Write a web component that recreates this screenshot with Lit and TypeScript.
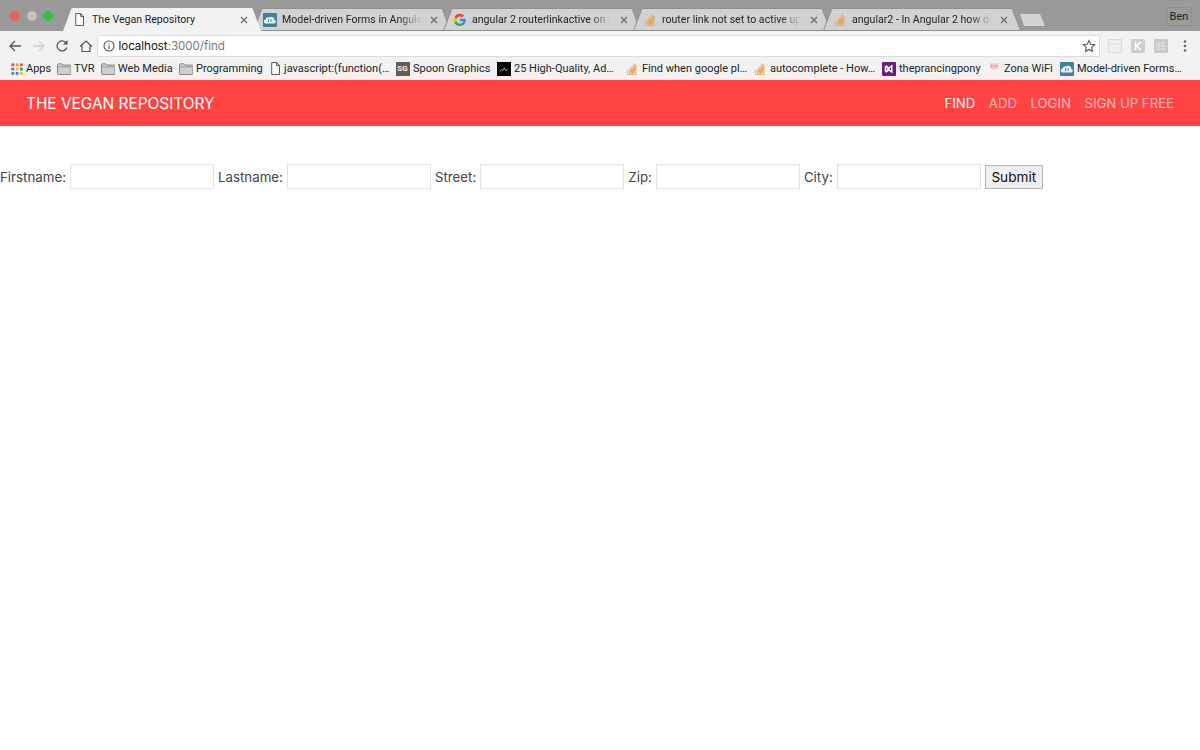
import { LitElement, html, css, svg } from "lit";
import { customElement } from "lit/decorators.js";

const cloud = html`<svg class="fav" viewBox="0 0 14 14"><rect width="14" height="14" rx="1" fill="#3f8299"/><path d="M3 10.500a2 2 0 0 1-.3-4 2.600 2.600 0 0 1 3.600-2 3 3 0 0 1 5 2.300a1.900 1.900 0 0 1 0 3.700z" fill="#e4f0f4"/><path d="M5.500 6v3M8 6v3" stroke="#3f8299" stroke-width=".9"/></svg>`;
const gLogo = html`<svg class="fav" viewBox="0 0 14 14"><path d="M12.900 7.100c0-.5 0-.9-.1-1.300H7v2.500h3.300a2.800 2.800 0 0 1-1.200 1.800v1.500h2a5.900 5.900 0 0 0 1.800-4.500z" fill="#4285f4"/><path d="M7 13c1.600 0 3-.5 4.100-1.400l-2-1.500a3.700 3.700 0 0 1-5.600-1.900H1.400v1.600A6 6 0 0 0 7 13z" fill="#34a853"/><path d="M3.500 8.200a3.600 3.600 0 0 1 0-2.400V4.200H1.400a6 6 0 0 0 0 5.600z" fill="#fbbc05"/><path d="M7 3.400c.9 0 1.700.3 2.300.9L11.100 2.500A6 6 0 0 0 1.400 4.200l2.100 1.600A3.600 3.600 0 0 1 7 3.400z" fill="#ea4335"/></svg>`;
const so = html`<svg class="fav" viewBox="0 0 14 14"><path d="M2.500 8v4.500h8.500V8" fill="none" stroke="#c9b79c" stroke-width="1.200"/><path d="M4 10.800h5.500M4 9.200l5.500.6M4.500 7.400l5.300 1.300M5.600 5.500l4.800 2.400M7.300 3.600l3.900 3.400M8.800 1.500l2.800 3.800" fill="none" stroke="#f2a03f" stroke-width="1.200"/></svg>`;
const file = html`<svg class="fav file" viewBox="0 0 10 12"><path d="M1.500.5h4.500l2.700 2.700v8.300H1.500zM6 .5v2.700h2.700" fill="#fff" stroke="#555" stroke-width=".9"/></svg>`;
const x = html`<svg class="x" viewBox="0 0 8 8"><path d="M1 1l6 6M7 1l-6 6" stroke="#666" stroke-width="1.100"/></svg>`;
const folder = html`<svg class="fav folder" viewBox="0 0 14 12"><path d="M.5 10.800V1.500a.7.7 0 0 1 .7-.7h3.600l1.200 1.300h7.300a.7.7 0 0 1 .7.700v8a.7.7 0 0 1-.7.700H1.200a.7.7 0 0 1-.7-.7z" fill="#cfcfcf" stroke="#7d7d7d" stroke-width=".9"/><path d="M1 3.800h12" stroke="#8e8e8e" stroke-width=".8"/></svg>`;
const appColors = [["#e0503c", "#e8a33a", "#e05a3c"], ["#3f7fdc", "#e8c23a", "#3fa35a"], ["#4aa05a", "#3f7fdc", "#e8c23a"]];
const apps = html`<svg class="fav apps" viewBox="0 0 12 12">${[0, 1, 2].flatMap((r) => [0, 1, 2].map((c) => svg`<rect x=${c * 4.3 + 0.4} y=${r * 4.3 + 0.4} width="2.800" height="2.800" fill=${appColors[r][c]}/>`))}</svg>`;
const sg = html`<span class="sg">SG</span>`;
const blk = html`<svg class="fav" viewBox="0 0 14 14"><rect width="14" height="14" fill="#050505"/><path d="M3 9.500c1-2 1.500-2.500 2-1.500s1 1 1.500-.5.800-2.500 1-1 .5 2.500 3 1.500" fill="none" stroke="#cdb98a" stroke-width=".9"/></svg>`;
const vs = html`<svg class="fav" viewBox="0 0 14 14"><rect width="14" height="14" rx="1" fill="#68217a"/><path d="M10.500 2.500v9L7 8.800 4.500 10.700 2.700 9.500V4.500l1.800-1.200L7 5.200zM4.300 5.800v2.400L5.800 7zM9 5.300 7.300 7 9 8.700z" fill="#fff" fill-rule="evenodd"/></svg>`;
const wifi = html`<svg class="fav" viewBox="0 0 14 14"><path d="M3 1.500c1.200-.8 2.500-.8 3 0 .7-.8 2.500-.8 3 0 1-.8 2-.5 3 0l-1 5-4 1.500-4-1.500z" fill="#f6c9c9"/><path d="M4 4h1M6.500 4h1M9 4h1" stroke="#d8504f" stroke-width="1.200"/></svg>`;

const tabs = [
  { icon: file, title: "The Vegan Repository", active: true },
  { icon: cloud, title: "Model-driven Forms in Angular" },
  { icon: gLogo, title: "angular 2 routerlinkactive on nested" },
  { icon: so, title: "router link not set to active upon" },
  { icon: so, title: "angular2 - In Angular 2 how does" },
];
const bookmarks = [
  { icon: apps, t: "Apps", w: 46 }, { icon: folder, t: "TVR", w: 44 }, { icon: folder, t: "Web Media", w: 78 },
  { icon: folder, t: "Programming", w: 91 }, { icon: file, t: "javascript:(function(…", w: 126 },
  { icon: sg, t: "Spoon Graphics", w: 101 }, { icon: blk, t: "25 High-Quality, Ad…", w: 128 },
  { icon: so, t: "Find when google pl…", w: 128 }, { icon: so, t: "autocomplete - How…", w: 129 },
  { icon: vs, t: "theprancingpony", w: 105 }, { icon: wifi, t: "Zona WiFi", w: 73 }, { icon: cloud, t: "Model-driven Forms…", w: 122 },
];
const fields = ["Firstname", "Lastname", "Street", "Zip", "City"];

@customElement("app-root")
export class AppRoot extends LitElement {
  static styles = css`
    :host { display: block; min-height: 750px; background: #fff; font-family: Inter, "Noto Sans", sans-serif; }
    .strip { height: 31px; background: #9a9a9a; display: flex; position: relative; box-sizing: border-box; font-family: Roboto, sans-serif; }
    .dots { width: 63px; flex: none; display: flex; gap: 6.500px; padding: 11px 0 0 10px; box-sizing: border-box; }
    .dot { width: 10px; height: 10px; border-radius: 50%; }
    .red { background: #f0605a; }
    .grey { background: #c8c2c2; }
    .green { background: #2cc443; }
    .tabs { display: flex; padding-top: 8px; flex: none; }
    .tab { position: relative; width: 198px; height: 23px; margin-right: -8px; flex: none; display: flex; align-items: center;
      padding: 0 13px 0 10px; box-sizing: border-box; font-size: 10.600px; color: #222; gap: 5px; }
    .tab.active { z-index: 2; padding-left: 11px; gap: 7px; }
    .shape { position: absolute; inset: 0; width: 198px; height: 23px; }
    .title { position: relative; flex: 1; white-space: nowrap; overflow: hidden; min-width: 0;
      -webkit-mask-image: linear-gradient(90deg, #000 84%, transparent 100%); mask-image: linear-gradient(90deg, #000 84%, transparent 100%); }
    .tab.active .title { -webkit-mask-image: none; mask-image: none; }
    .fav { width: 14px; height: 14px; flex: none; position: relative; }
    .apps { width: 12px; height: 12px; }
    .file { width: 11px; height: 13px; }
    .folder { height: 12px; }
    .x { width: 8px; height: 8px; flex: none; position: relative; margin-left: 3px; }
    .newtab { width: 25px; height: 12px; margin: 14px 0 0 7px; flex: none; background: #d4d4d4; clip-path: polygon(0 0, 20px 0, 100% 100%, 4px 100%); }
    .spacer { flex: 1; }
    .profile { width: 26px; height: 19px; margin: 7px 8px 0 0; border: 1px solid #8f8f8f; border-radius: 3px; box-sizing: border-box;
      font-size: 11px; color: #222; display: flex; align-items: center; justify-content: center; }
    .toolbar { height: 26px; background: #f2f2f2; display: flex; align-items: center; padding: 4px 0 0 8px; box-sizing: border-box; font-family: Roboto, sans-serif; }
    .nav { width: 14px; height: 14px; flex: none; margin-right: 9.500px; }
    .nav.home { margin-right: 4px; }
    .omni { width: 1003px; height: 22px; flex: none; box-sizing: border-box; background: #fff; border: 1px solid #dcdcdc; border-radius: 2px;
      display: flex; align-items: center; padding: 0 3px 0 5px; font-family: Inter, sans-serif; font-size: 11.500px; color: #777; }
    .omni b { font-weight: 400; color: #111; }
    .info { width: 12px; height: 12px; margin-right: 4px; flex: none; }
    .star { width: 14px; height: 14px; margin-left: auto; flex: none; }
    .ext { display: flex; align-items: center; gap: 9px; margin-left: 8px; }
    .ext svg { width: 14px; height: 14px; }
    .menu { margin-left: 1px; }
    .bookmarks { height: 23px; background: #f2f2f2; display: flex; align-items: center; padding-left: 10.500px; box-sizing: border-box; font-family: Roboto, sans-serif; font-size: 11px; color: #222; }
    .bm { display: flex; align-items: center; gap: 3.500px; white-space: nowrap; flex: none; }
    .sg { width: 14px; height: 14px; flex: none; background: #6a5a52; color: #eee; font-size: 8px; font-weight: 700; display: flex; align-items: center; justify-content: center; }
    header { height: 46px; background: #ff4444; display: flex; align-items: center; justify-content: space-between; padding: 0 26px; box-sizing: border-box; color: #fff; }
    .brand { font-size: 15.400px; }
    nav { display: flex; gap: 13.500px; font-size: 13.200px; color: rgba(255, 255, 255, .65); }
    nav .on { color: #fff; }
    form { display: flex; align-items: center; gap: 4px; padding-top: 38px; font-size: 13.300px; color: #444; }
    input { width: 144px; height: 25px; box-sizing: border-box; border: 1px solid #e2e2e2; background: #fff; margin: 0; padding: 0; }
    button { width: 58px; height: 24px; margin-top: 1px; box-sizing: border-box; border: 1px solid #b5b5b5; background: #efefef; font: inherit; font-size: 13.600px; color: #111; padding: 0; }
  `;

  render() {
    return html`
      <div class="strip">
        <div class="dots"><span class="dot red"></span><span class="dot grey"></span><span class="dot green"></span></div>
        <div class="tabs">
          ${tabs.map((t) => html`
            <div class="tab ${t.active ? "active" : ""}">
              <svg class="shape" viewBox="0 0 198 23"><path d=${t.active ? "M0.500 23L9 .5H189L197.500 23" : "M0.500 22.500L9 .5H189L197.500 22.500Z"} fill=${t.active ? "#f2f2f2" : "#d2d2d2"} stroke=${t.active ? "#f2f2f2" : "#8f8f8f"}/></svg>
              ${t.icon}<span class="title">${t.title}</span>${x}
            </div>`)}
        </div>
        <div class="newtab"></div>
        <div class="spacer"></div>
        <div class="profile">Ben</div>
      </div>
      <div class="toolbar">
        <svg class="nav" viewBox="0 0 14 14"><path d="M13 7H2M7 2L2 7l5 5" fill="none" stroke="#555" stroke-width="1.300"/></svg>
        <svg class="nav" viewBox="0 0 14 14"><path d="M1 7h11M7 2l5 5-5 5" fill="none" stroke="#d0d0d0" stroke-width="1.300"/></svg>
        <svg class="nav" viewBox="0 0 14 14"><path d="M11.800 8.500A5 5 0 1 1 10.500 3.300" fill="none" stroke="#555" stroke-width="1.300"/><path d="M12.500 1v4.500H8z" fill="#555"/></svg>
        <svg class="nav home" viewBox="0 0 14 14"><path d="M1 7.500L7 2l6 5.500M3 6.500V12.500H11V6.500" fill="none" stroke="#555" stroke-width="1.200"/></svg>
        <div class="omni">
          <svg class="info" viewBox="0 0 12 12"><circle cx="6" cy="6" r="5" fill="none" stroke="#555" stroke-width="1.100"/><path d="M6 5.200v3.500M6 3.200v1.100" stroke="#555" stroke-width="1.100"/></svg>
          <span><b>localhost</b>:3000/find</span>
          <svg class="star" viewBox="0 0 14 14"><path d="M7 1.500l1.700 3.700 4 .5-3 2.700.8 4L7 10.400l-3.500 2 .8-4-3-2.700 4-.5z" fill="none" stroke="#555" stroke-width="1.100"/></svg>
        </div>
        <div class="ext">
          <svg viewBox="0 0 14 14"><rect x=".5" y=".5" width="13" height="13" fill="#eee" stroke="#ddd"/><path d="M1 5h12" stroke="#ddd"/></svg>
          <svg viewBox="0 0 14 14"><rect width="14" height="14" rx="1" fill="#cfcfcf"/><path d="M4.500 3v8M10 3L5.500 7l4.500 4" fill="none" stroke="#fff" stroke-width="1.600"/></svg>
          <svg viewBox="0 0 14 14"><rect width="14" height="14" fill="#c9c9c9"/><path d="M2 4h10M2 7h10M2 10h10M5 2.500v9M9 2.500v9" stroke="#e4e4e4" stroke-width=".8"/></svg>
          <svg class="menu" viewBox="0 0 14 14"><circle cx="7" cy="2.500" r="1.300" fill="#666"/><circle cx="7" cy="7" r="1.300" fill="#666"/><circle cx="7" cy="11.500" r="1.300" fill="#666"/></svg>
        </div>
      </div>
      <div class="bookmarks">
        ${bookmarks.map((b) => html`<div class="bm" style="width:${b.w}px">${b.icon}<span>${b.t}</span></div>`)}
      </div>
      <header>
        <div class="brand">THE VEGAN REPOSITORY</div>
        <nav><span class="on">FIND</span><span>ADD</span><span>LOGIN</span><span>SIGN UP FREE</span></nav>
      </header>
      <form @submit=${(e: Event) => e.preventDefault()}>
        ${fields.map((f) => html`<label for=${f}>${f}:</label><input id=${f} type="text" />`)}
        <button type="submit">Submit</button>
      </form>
    `;
  }
}
